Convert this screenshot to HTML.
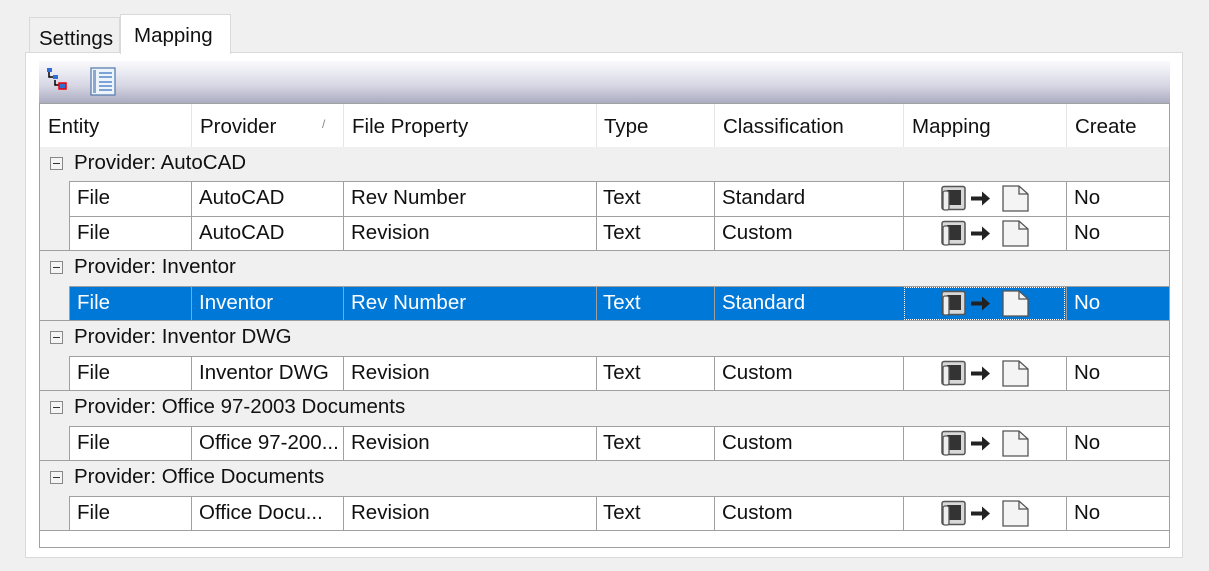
<!DOCTYPE html>
<html><head><meta charset="utf-8"><style>
*{margin:0;padding:0;box-sizing:border-box}
body{width:1209px;height:571px;background:#f0f0f0;font-family:"Liberation Sans","DejaVu Sans",sans-serif;position:relative;overflow:hidden;color:#111}
.a{position:absolute}
.t{font-size:20.5px;white-space:nowrap;position:absolute}
.vl{position:absolute;width:1px;background:#a0a0a0;z-index:5}
.hl{position:absolute;height:1px;background:#a0a0a0;z-index:5}
.grp{position:absolute;left:40px;width:1129px;height:35px;background:#f0f0f0}
.row{position:absolute;left:69px;width:1100px;height:35px;background:#fff}
.sel{background:#0078d7;color:#fff}
.ex{position:absolute;left:10px;top:10px;width:13px;height:13px;border:1px solid #888;background:#f4f4f4}
.ex:after{content:"";position:absolute;left:2px;top:5px;width:7px;height:1px;background:#333}
.t.w{z-index:6}
</style></head><body>
<svg width="0" height="0" style="position:absolute"><defs>
<g id="ic">
<rect x="1" y="1.5" width="23" height="23" rx="2" fill="#d8d8d8" stroke="#555" stroke-width="1.5"/>
<rect x="6" y="5" width="14" height="15" fill="#333"/>
<rect x="2" y="6" width="6" height="19" rx="2" fill="#eee" stroke="#555" stroke-width="1.3"/>
<path d="M30 13.5h13" stroke="#222" stroke-width="4"/>
<path d="M41 6.5l8 7-8 7z" fill="#222"/>
<path d="M62 1h16l9 8v17h-25z" fill="#f4f4f4" stroke="#555" stroke-width="1.3"/>
<path d="M78 1v8h9" fill="none" stroke="#555" stroke-width="1.3"/>
</g></defs></svg>

<div class="a" style="left:29px;top:17px;width:91px;height:36px;background:#f0f0f0;border:1px solid #d9d9d9;border-bottom:none"></div>
<div class="t" style="left:39px;top:27px">Settings</div>
<div class="a" style="left:120px;top:14px;width:111px;height:40px;background:#fff;border:1px solid #d9d9d9;border-bottom:none;z-index:2"></div>
<div class="t" style="left:134px;top:24px;z-index:3">Mapping</div>
<div class="a" style="left:25px;top:52px;width:1158px;height:506px;background:#fff;border:1px solid #d9d9d9"></div>
<div class="a" style="left:39px;top:61px;width:1131px;height:43px;background:linear-gradient(#fbfbfd,#d8d8e6 55%,#a9a9c0)"></div>
<svg class="a" style="left:46px;top:67px" width="30" height="30">
<rect x="1" y="1" width="5" height="4" fill="#2f6fd6"/>
<path d="M3 5v5h4M9 13v5h4" stroke="#000" stroke-width="1.5" fill="none"/>
<rect x="7" y="8" width="5" height="4" fill="#2f6fd6"/>
<rect x="13" y="16" width="7" height="6" fill="#2f6fd6" stroke="#e00" stroke-width="1.5"/>
</svg>
<svg class="a" style="left:89px;top:67px" width="30" height="30">
<rect x="2" y="1" width="24" height="27" fill="#eef4fc" stroke="#5a7fb0" stroke-width="1.3"/>
<rect x="4" y="3" width="3" height="23" fill="#8aa8d0"/>
<path d="M10 6h13M10 10h13M10 15h13M10 19h13M10 23h13" stroke="#3a70c0" stroke-width="1.3"/>
</svg>
<div class="a" style="left:39px;top:103px;width:1131px;height:445px;border:1px solid #a0a0a0;background:#fff"></div>
<div class="vl" style="left:191px;top:104px;height:43px;background:#e5e5e5"></div>
<div class="vl" style="left:343px;top:104px;height:43px;background:#e5e5e5"></div>
<div class="vl" style="left:596px;top:104px;height:43px;background:#e5e5e5"></div>
<div class="vl" style="left:714px;top:104px;height:43px;background:#e5e5e5"></div>
<div class="vl" style="left:903px;top:104px;height:43px;background:#e5e5e5"></div>
<div class="vl" style="left:1066px;top:104px;height:43px;background:#e5e5e5"></div>
<div class="t" style="left:48px;top:115px">Entity</div>
<div class="t" style="left:200px;top:115px">Provider</div>
<div class="t" style="left:322px;top:117px;font-size:12px;color:#888">/</div>
<div class="t" style="left:352px;top:115px">File Property</div>
<div class="t" style="left:604px;top:115px">Type</div>
<div class="t" style="left:723px;top:115px">Classification</div>
<div class="t" style="left:912px;top:115px">Mapping</div>
<div class="t" style="left:1075px;top:115px">Create</div>

<div class="grp" style="top:147px;height:104px"><div class="ex"></div><div class="t" style="left:34px;top:4px">Provider: AutoCAD</div></div>
<div class="grp" style="top:251px;height:70px"><div class="ex"></div><div class="t" style="left:34px;top:4px">Provider: Inventor</div></div>
<div class="grp" style="top:321px;height:70px"><div class="ex"></div><div class="t" style="left:34px;top:4px">Provider: Inventor DWG</div></div>
<div class="grp" style="top:391px;height:70px"><div class="ex"></div><div class="t" style="left:34px;top:4px">Provider: Office 97-2003 Documents</div></div>
<div class="grp" style="top:461px;height:70px"><div class="ex"></div><div class="t" style="left:34px;top:4px">Provider: Office Documents</div></div>

<div class="row" style="top:181px;border-top:1px solid #a0a0a0;border-left:1px solid #a0a0a0"></div>
<div class="row" style="top:216px;border-top:1px solid #a0a0a0;border-left:1px solid #a0a0a0"></div>
<div class="row sel" style="top:286px;border-top:1px solid #a0a0a0;border-left:1px solid #a0a0a0"></div>
<div class="row" style="top:356px;border-top:1px solid #a0a0a0;border-left:1px solid #a0a0a0"></div>
<div class="row" style="top:426px;border-top:1px solid #a0a0a0;border-left:1px solid #a0a0a0"></div>
<div class="row" style="top:496px;border-top:1px solid #a0a0a0;border-left:1px solid #a0a0a0"></div>

<div class="hl" style="left:40px;top:250px;width:1129px"></div>
<div class="hl" style="left:40px;top:320px;width:1129px"></div>
<div class="hl" style="left:40px;top:390px;width:1129px"></div>
<div class="hl" style="left:40px;top:460px;width:1129px"></div>
<div class="hl" style="left:40px;top:530px;width:1129px"></div>

<div class="vl" style="left:191px;top:181px;height:70px"></div><div class="vl" style="left:343px;top:181px;height:70px"></div><div class="vl" style="left:596px;top:181px;height:70px"></div><div class="vl" style="left:714px;top:181px;height:70px"></div><div class="vl" style="left:903px;top:181px;height:70px"></div><div class="vl" style="left:1066px;top:181px;height:70px"></div>
<div class="vl" style="left:191px;top:286px;height:35px"></div><div class="vl" style="left:343px;top:286px;height:35px"></div><div class="vl" style="left:596px;top:286px;height:35px"></div><div class="vl" style="left:714px;top:286px;height:35px"></div><div class="vl" style="left:1066px;top:286px;height:35px"></div>
<div class="vl" style="left:191px;top:356px;height:35px"></div><div class="vl" style="left:343px;top:356px;height:35px"></div><div class="vl" style="left:596px;top:356px;height:35px"></div><div class="vl" style="left:714px;top:356px;height:35px"></div><div class="vl" style="left:903px;top:356px;height:35px"></div><div class="vl" style="left:1066px;top:356px;height:35px"></div>
<div class="vl" style="left:191px;top:426px;height:35px"></div><div class="vl" style="left:343px;top:426px;height:35px"></div><div class="vl" style="left:596px;top:426px;height:35px"></div><div class="vl" style="left:714px;top:426px;height:35px"></div><div class="vl" style="left:903px;top:426px;height:35px"></div><div class="vl" style="left:1066px;top:426px;height:35px"></div>
<div class="vl" style="left:191px;top:496px;height:35px"></div><div class="vl" style="left:343px;top:496px;height:35px"></div><div class="vl" style="left:596px;top:496px;height:35px"></div><div class="vl" style="left:714px;top:496px;height:35px"></div><div class="vl" style="left:903px;top:496px;height:35px"></div><div class="vl" style="left:1066px;top:496px;height:35px"></div>
<div class="a" style="left:904px;top:287px;width:161px;height:33px;border:1px dotted #fff;z-index:6"></div>

<div class="t" style="left:77px;top:186px">File</div><div class="t" style="left:199px;top:186px">AutoCAD</div><div class="t" style="left:351px;top:186px">Rev Number</div><div class="t" style="left:603px;top:186px">Text</div><div class="t" style="left:722px;top:186px">Standard</div><div class="t" style="left:1074px;top:186px">No</div>
<svg class="a" style="left:941px;top:185px" width="90" height="28"><use href="#ic"/></svg>
<div class="t" style="left:77px;top:221px">File</div><div class="t" style="left:199px;top:221px">AutoCAD</div><div class="t" style="left:351px;top:221px">Revision</div><div class="t" style="left:603px;top:221px">Text</div><div class="t" style="left:722px;top:221px">Custom</div><div class="t" style="left:1074px;top:221px">No</div>
<svg class="a" style="left:941px;top:220px" width="90" height="28"><use href="#ic"/></svg>
<div class="t" style="left:77px;top:291px;color:#fff">File</div><div class="t" style="left:199px;top:291px;color:#fff">Inventor</div><div class="t" style="left:351px;top:291px;color:#fff">Rev Number</div><div class="t" style="left:603px;top:291px;color:#fff">Text</div><div class="t" style="left:722px;top:291px;color:#fff">Standard</div><div class="t" style="left:1074px;top:291px;color:#fff">No</div>
<svg class="a" style="left:941px;top:290px" width="90" height="28"><use href="#ic"/></svg>
<div class="t" style="left:77px;top:361px">File</div><div class="t" style="left:199px;top:361px">Inventor DWG</div><div class="t" style="left:351px;top:361px">Revision</div><div class="t" style="left:603px;top:361px">Text</div><div class="t" style="left:722px;top:361px">Custom</div><div class="t" style="left:1074px;top:361px">No</div>
<svg class="a" style="left:941px;top:360px" width="90" height="28"><use href="#ic"/></svg>
<div class="t" style="left:77px;top:431px">File</div><div class="t" style="left:199px;top:431px">Office 97-200...</div><div class="t" style="left:351px;top:431px">Revision</div><div class="t" style="left:603px;top:431px">Text</div><div class="t" style="left:722px;top:431px">Custom</div><div class="t" style="left:1074px;top:431px">No</div>
<svg class="a" style="left:941px;top:430px" width="90" height="28"><use href="#ic"/></svg>
<div class="t" style="left:77px;top:501px">File</div><div class="t" style="left:199px;top:501px">Office Docu...</div><div class="t" style="left:351px;top:501px">Revision</div><div class="t" style="left:603px;top:501px">Text</div><div class="t" style="left:722px;top:501px">Custom</div><div class="t" style="left:1074px;top:501px">No</div>
<svg class="a" style="left:941px;top:500px" width="90" height="28"><use href="#ic"/></svg>
</body></html>
